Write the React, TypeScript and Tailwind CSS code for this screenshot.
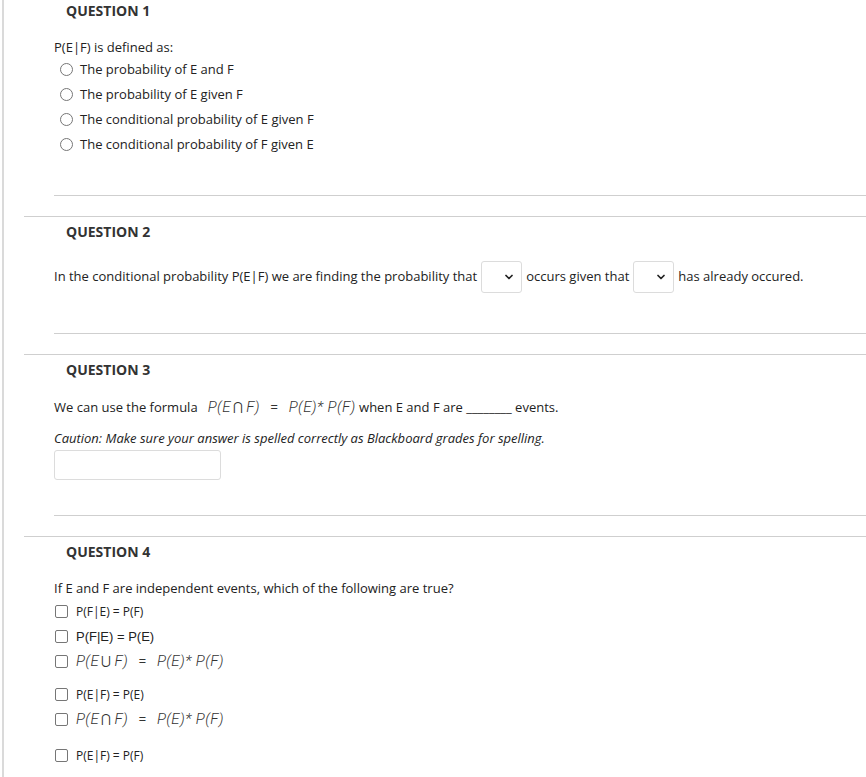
import { ChevronDown } from 'lucide-react'

const body = { fontFamily: '"Open Sans", "Liberation Sans", sans-serif' }
const math = { fontFamily: 'Roboto, "Liberation Sans", sans-serif' }
const sym = { fontFamily: '"DejaVu Sans", sans-serif' }

function Title({ n }: { n: number }) {
  return (
    <div className="h-5 pl-[42px] text-[14px] font-bold leading-5 text-[#333]">QUESTION {n}</div>
  )
}

// formula rendered like the math editor output: thin italic sans
function Formula({ op }: { op: string }) {
  return (
    <span style={math} className="inline-flex items-center text-[15px] font-light italic leading-5 tracking-[0.4px] text-[#333]">
      <span>P(E</span>
      <span style={sym} className="ml-[2px] mr-[3px] not-italic text-[12px] font-extralight leading-5">{op}</span>
      <span>F)</span>
      <span className="mx-[10px] not-italic">=</span>
      <span>P(E)*&nbsp;P(F)</span>
    </span>
  )
}

function Radio({ label }: { label: string }) {
  return (
    <div className="flex h-[25px] items-center pl-[6px]">
      <span className="h-[13px] w-[13px] rounded-full border border-[#767676] bg-white" />
      <span className="ml-[7px]">{label}</span>
    </div>
  )
}

function Check({ children, extra = '' }: { children: React.ReactNode; extra?: string }) {
  return (
    <div className={`flex h-[25px] items-center pl-px ${extra}`}>
      <span className="h-[13px] w-[13px] rounded-[2px] border border-[#767676] bg-white" />
      <span className="ml-[8px]">{children}</span>
    </div>
  )
}

function Select() {
  return (
    <span className="mx-[4px] inline-flex h-[32px] w-[41px] items-center justify-end rounded-[3px] border border-[#dcdcdc] bg-white pr-[6px]">
      <ChevronDown size={12} strokeWidth={3.5} color="#222" />
    </span>
  )
}

export default function App() {
  return (
    <div style={body} className="min-h-[777px] w-[866px] overflow-hidden bg-white text-[13px] text-[#222]">
      <div className="ml-[2px] min-h-[777px] border-l-2 border-[#dadada]">
        {/* question 1 */}
        <div className="ml-[20px] border-b border-[#cfcfcf] pt-px">
          <Title n={1} />
          <div className="ml-[30px] mt-[16px] border-b border-[#cfcfcf] pb-[38px]">
            <div className="h-5 leading-5">P(E|F) is defined as:</div>
            <Radio label="The probability of E and F" />
            <Radio label="The probability of E given F" />
            <Radio label="The conditional probability of E given F" />
            <Radio label="The conditional probability of F given E" />
          </div>
          <div className="h-[20px]" />
        </div>

        {/* question 2 */}
        <div className="ml-[20px] border-b border-[#cfcfcf] pt-[5px]">
          <Title n={2} />
          <div className="ml-[30px] mt-[19px] border-b border-[#cfcfcf] pb-[40px]">
            <div className="flex h-[32px] items-center">
              <span>In the conditional probability P(E|F) we are finding the probability that</span>
              <Select />
              <span>occurs given that</span>
              <Select />
              <span>has already occured.</span>
            </div>
          </div>
          <div className="h-[20px]" />
        </div>

        {/* question 3 */}
        <div className="ml-[20px] border-b border-[#cfcfcf] pt-[5px]">
          <Title n={3} />
          <div className="ml-[30px] mt-[17px] border-b border-[#cfcfcf] pb-[35px]">
            <div className="flex h-5 items-center leading-5">
              <span>We can use the formula&nbsp;&nbsp;&nbsp;</span>
              <Formula op="⋂" />
              <span>&nbsp;when E and F are ________ events.</span>
            </div>
            <div className="mt-[11px] h-5 italic leading-5">
              Caution: Make sure your answer is spelled correctly as Blackboard grades for spelling.
            </div>
            <div className="mt-[2px] h-[30px] w-[167px] rounded-[3px] border border-[#dcdcdc] bg-white" />
          </div>
          <div className="h-[20px]" />
        </div>

        {/* question 4 */}
        <div className="ml-[20px] pt-[5px]">
          <Title n={4} />
          <div className="ml-[30px] mt-[16px]">
            <div className="h-5 leading-5">If E and F are independent events, which of the following are true?</div>
            <div className="pt-px">
              <Check><span className="text-[12px]">P(F|E) = P(F)</span></Check>
              <Check><span style={{ fontFamily: '"Liberation Sans", sans-serif' }} className="text-[13px]">P(F|E) = P(E)</span></Check>
              <Check extra="mb-[8px]"><Formula op="⋃" /></Check>
              <Check><span className="text-[12px]">P(E|F) = P(E)</span></Check>
              <Check extra="mb-[11px]"><Formula op="⋂" /></Check>
              <Check><span className="text-[12px]">P(E|F) = P(F)</span></Check>
            </div>
          </div>
        </div>
      </div>
    </div>
  )
}
